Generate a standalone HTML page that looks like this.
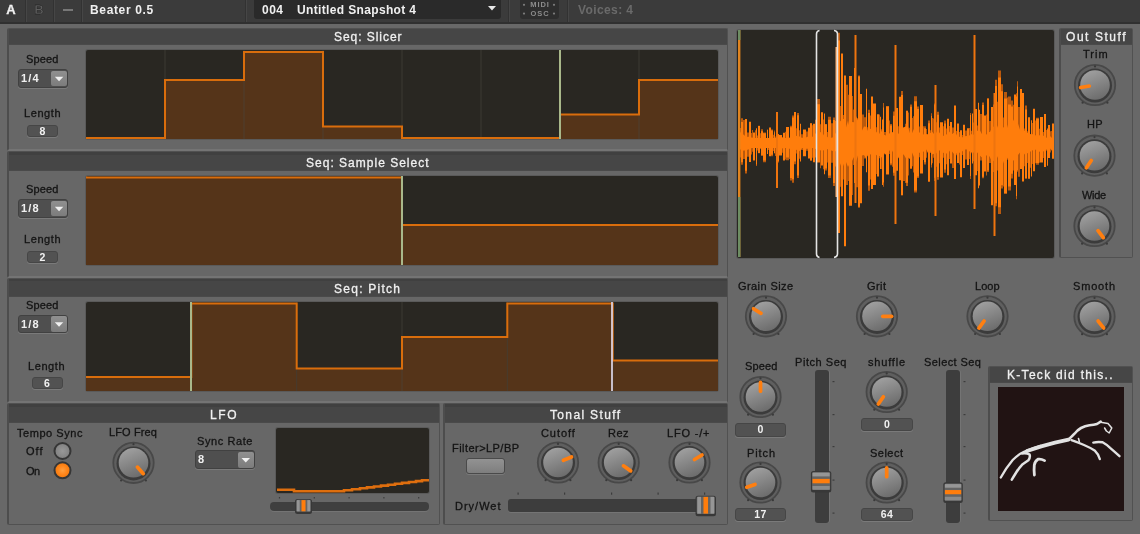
<!DOCTYPE html><html><head><meta charset="utf-8"><style>
html,body{margin:0;padding:0;}
body{width:1140px;height:534px;overflow:hidden;background:#686868;font-family:"Liberation Sans",sans-serif;position:relative;}
div{position:absolute;box-sizing:border-box;}
#wr{left:-12px;top:-12px;width:1164px;height:558px;background:linear-gradient(#3b3b3b 0,#3b3b3b 34px,#303030 34px,#303030 36px,#686868 36px);filter:blur(0.45px);}
#in{left:12px;top:12px;width:1140px;height:534px;}
svg{position:absolute;left:0;top:0;}
.t{will-change:transform;white-space:nowrap;text-align:center;line-height:12px;height:12px;font-size:11px;color:#141414;letter-spacing:0.4px;-webkit-text-stroke:0.3px #141414;}
.w{color:#f0f0f0;-webkit-text-stroke:0.3px #f0f0f0;}
.panel{background:#676767;border:1.5px solid #515151;border-left:2px solid #4d4d4d;border-radius:2px;}
.hd{background:#464646;left:0;top:0;right:0;height:17px;border-bottom:1px solid #4a4a4a;}
.disp{background:#292722;border-radius:2px;box-shadow:0 0 0 1px #5a5a5a;}
.vb{background:#525252;border:1px solid #464646;border-radius:3px;box-shadow:0 1px 0 #7a7a7a;color:#f2f2f2;font-size:10.5px;font-weight:bold;text-align:center;line-height:11.5px;letter-spacing:0.3px;}
.dd{background:#4f4f4f;border:1.3px solid #414141;border-radius:3px;box-shadow:0 1px 0 #7a7a7a;}
</style></head><body><div id="wr"><div id="in">
<div style="left:0;top:0;width:1140px;height:24px;background:#3b3b3b;border-bottom:2px solid #303030;"></div>
<div style="left:25px;top:0;width:2px;height:22px;background:#323232;border-right:1px solid #464646;"></div>
<div style="left:53px;top:0;width:2px;height:22px;background:#323232;border-right:1px solid #464646;"></div>
<div style="left:81px;top:0;width:2px;height:22px;background:#323232;border-right:1px solid #464646;"></div>
<div style="left:245px;top:0;width:2px;height:22px;background:#323232;border-right:1px solid #464646;"></div>
<div style="left:507.5px;top:0;width:2px;height:22px;background:#323232;border-right:1px solid #464646;"></div>
<div style="left:566.5px;top:0;width:2px;height:22px;background:#323232;border-right:1px solid #464646;"></div>
<div style="left:254px;top:0;width:247px;height:19px;background:#2a2a2a;border-radius:0 0 3px 3px;"></div>
<div class="t w" style="left:0.5px;top:4.0px;width:20px;font-size:13px;letter-spacing:0px;font-weight:bold;">A</div>
<div class="t " style="left:29.0px;top:4.0px;width:20px;font-size:13px;letter-spacing:0px;color:#5e5e5e;font-weight:bold;">B</div>
<div style="left:63px;top:9px;width:10px;height:2px;background:#777;"></div>
<div class="t w" style="left:89.5px;top:4px;width:100px;text-align:left;font-size:12px;font-weight:bold;letter-spacing:0.65px;-webkit-text-stroke:0;">Beater 0.5</div>
<div class="t w" style="left:262px;top:4px;width:40px;text-align:left;font-size:12px;font-weight:bold;letter-spacing:0.5px;-webkit-text-stroke:0;">004</div>
<div class="t w" style="left:297px;top:4px;width:200px;text-align:left;font-size:12px;font-weight:bold;letter-spacing:0.35px;-webkit-text-stroke:0;">Untitled Snapshot 4</div>
<svg width="1140" height="24"><path d="M488 6 h8 l-4 4.5z" fill="#e8e8e8"/></svg>
<div style="left:519.5px;top:0px;width:39px;height:18.5px;background:#2e2e2e;border-radius:0 0 3px 3px;"></div>
<div class="t" style="left:519.5px;top:1px;width:39px;font-size:7.5px;line-height:8.6px;height:18px;color:#8c8c8c;font-weight:bold;letter-spacing:0.9px;-webkit-text-stroke:0;padding-left:1px;">MIDI<br>OSC</div>
<svg width="1140" height="24"><g fill="#7c7c7c"><circle cx="524" cy="4.8" r="1.1"/><circle cx="554" cy="4.8" r="1.1"/><circle cx="524" cy="13.6" r="1.1"/><circle cx="554" cy="13.6" r="1.1"/></g></svg>
<div class="t" style="left:578px;top:4px;width:80px;text-align:left;font-size:12px;font-weight:bold;letter-spacing:0.4px;color:#6a6a6a;-webkit-text-stroke:0;">Voices: 4</div>
<div class="panel" style="left:6.7px;top:28.3px;width:721.3px;height:122.7px;border-bottom:2px solid #747474;"><div class="hd" style="height:15.7px;"></div></div>
<div class="t w" style="left:333.5px;top:30.5px;width:200px;text-align:left;font-size:12px;letter-spacing:0.95px;">Seq: Slicer</div>
<div class="disp" style="left:86px;top:50px;width:632px;height:89px;"></div>
<svg width="1140" height="534"><rect x="165.0" y="80" width="79.0" height="59.0" fill="#553419"/><rect x="244.0" y="52" width="79.0" height="87.0" fill="#553419"/><rect x="323.0" y="126.5" width="79.0" height="12.5" fill="#553419"/><rect x="560.0" y="114.5" width="79.0" height="24.5" fill="#553419"/><rect x="639.0" y="80" width="79.0" height="59.0" fill="#553419"/><rect x="164.5" y="50" width="1" height="89" fill="#4a4740" opacity="0.6"/><rect x="243.5" y="50" width="1" height="89" fill="#4a4740" opacity="0.6"/><rect x="322.5" y="50" width="1" height="89" fill="#4a4740" opacity="0.6"/><rect x="401.5" y="50" width="1" height="89" fill="#4a4740" opacity="0.6"/><rect x="480.5" y="50" width="1" height="89" fill="#4a4740" opacity="0.6"/><rect x="559.5" y="50" width="1" height="89" fill="#4a4740" opacity="0.6"/><rect x="638.5" y="50" width="1" height="89" fill="#4a4740" opacity="0.6"/><path d="M86.0 138 L165.0 138 L165.0 80 L244.0 80 L244.0 52 L323.0 52 L323.0 126.5 L402.0 126.5 L402.0 138 L481.0 138 L481.0 138 L560.0 138 L560.0 114.5 L639.0 114.5 L639.0 80 L718.0 80 " fill="none" stroke="#d96d0c" stroke-width="2" stroke-linejoin="miter"/><rect x="559" y="50" width="2" height="89" fill="#a9b88a"/></svg>
<div class="t " style="left:26.0px;top:53.0px;width:160px;text-align:left;font-size:11px;letter-spacing:0.12px;">Speed</div>
<div class="dd" style="left:17.7px;top:69.3px;width:50.6px;height:18.6px;"></div>
<div class="t w" style="left:21.2px;top:72.3px;width:40px;text-align:left;font-size:11px;font-weight:bold;letter-spacing:1.2px;-webkit-text-stroke:0;">1/4</div>
<div style="left:51.3px;top:70.8px;width:15.5px;height:15.600000000000001px;background:linear-gradient(#909090,#7c7c7c);border-radius:2px;"></div>
<svg width="1140" height="534"><path d="M54.8 76.8 h8.5 l-4.25 4.5z" fill="#f0f0f0"/></svg>
<div class="t " style="left:23.5px;top:107.0px;width:160px;text-align:left;font-size:11px;letter-spacing:0.57px;">Length</div>
<div class="vb" style="left:27px;top:124.5px;width:31px;height:12px;">8</div>
<div class="panel" style="left:6.7px;top:151px;width:721.3px;height:127px;border-bottom:2px solid #747474;"><div class="hd" style="height:19.0px;background:linear-gradient(#404040 0,#404040 3.3px,#464646 3.3px);"></div></div>
<div class="t w" style="left:306.0px;top:156.5px;width:200px;text-align:left;font-size:12px;letter-spacing:1.01px;">Seq: Sample Select</div>
<div class="disp" style="left:86px;top:176px;width:632px;height:89px;"></div>
<svg width="1140" height="534"><rect x="86.0" y="177.5" width="316.0" height="87.5" fill="#553419"/><rect x="402.0" y="225" width="316.0" height="40.0" fill="#553419"/><rect x="401.5" y="176" width="1" height="89" fill="#4a4740" opacity="0.6"/><path d="M86.0 177.5 L402.0 177.5 L402.0 225 L718.0 225 " fill="none" stroke="#d96d0c" stroke-width="2" stroke-linejoin="miter"/><rect x="401" y="176" width="2" height="89" fill="#a9b88a"/></svg>
<div class="t " style="left:26.0px;top:183.0px;width:160px;text-align:left;font-size:11px;letter-spacing:0.12px;">Speed</div>
<div class="dd" style="left:17.7px;top:199.3px;width:50.6px;height:18.6px;"></div>
<div class="t w" style="left:21.2px;top:202.3px;width:40px;text-align:left;font-size:11px;font-weight:bold;letter-spacing:1.2px;-webkit-text-stroke:0;">1/8</div>
<div style="left:51.3px;top:200.8px;width:15.5px;height:15.600000000000001px;background:linear-gradient(#909090,#7c7c7c);border-radius:2px;"></div>
<svg width="1140" height="534"><path d="M54.8 206.8 h8.5 l-4.25 4.5z" fill="#f0f0f0"/></svg>
<div class="t " style="left:23.5px;top:233.0px;width:160px;text-align:left;font-size:11px;letter-spacing:0.57px;">Length</div>
<div class="vb" style="left:27px;top:250.5px;width:31px;height:12px;">2</div>
<div class="panel" style="left:6.7px;top:278px;width:721.3px;height:125px;border-bottom:2px solid #747474;"><div class="hd" style="height:18.0px;background:linear-gradient(#404040 0,#404040 2.5px,#464646 2.5px);"></div></div>
<div class="t w" style="left:334.0px;top:282.5px;width:200px;text-align:left;font-size:12px;letter-spacing:1.26px;">Seq: Pitch</div>
<div class="disp" style="left:86px;top:302px;width:632px;height:89px;"></div>
<svg width="1140" height="534"><rect x="86.0" y="377" width="105.3" height="14.0" fill="#553419"/><rect x="191.3" y="303.5" width="105.3" height="87.5" fill="#553419"/><rect x="296.7" y="368.5" width="105.3" height="22.5" fill="#553419"/><rect x="402.0" y="337" width="105.3" height="54.0" fill="#553419"/><rect x="507.3" y="303.5" width="105.3" height="87.5" fill="#553419"/><rect x="612.7" y="360.5" width="105.3" height="30.5" fill="#553419"/><rect x="190.8" y="302" width="1" height="89" fill="#4a4740" opacity="0.6"/><rect x="296.2" y="302" width="1" height="89" fill="#4a4740" opacity="0.6"/><rect x="401.5" y="302" width="1" height="89" fill="#4a4740" opacity="0.6"/><rect x="506.8" y="302" width="1" height="89" fill="#4a4740" opacity="0.6"/><rect x="612.2" y="302" width="1" height="89" fill="#4a4740" opacity="0.6"/><path d="M86.0 377 L191.3 377 L191.3 303.5 L296.7 303.5 L296.7 368.5 L402.0 368.5 L402.0 337 L507.3 337 L507.3 303.5 L612.7 303.5 L612.7 360.5 L718.0 360.5 " fill="none" stroke="#d96d0c" stroke-width="2" stroke-linejoin="miter"/><rect x="190" y="302" width="2" height="89" fill="#a9b88a"/><rect x="611.1" y="302" width="1.8" height="89" fill="#d6cedd"/></svg>
<div class="t " style="left:26.0px;top:298.5px;width:160px;text-align:left;font-size:11px;letter-spacing:0.12px;">Speed</div>
<div class="dd" style="left:17.7px;top:314.8px;width:50.6px;height:18.6px;"></div>
<div class="t w" style="left:21.2px;top:317.8px;width:40px;text-align:left;font-size:11px;font-weight:bold;letter-spacing:1.2px;-webkit-text-stroke:0;">1/8</div>
<div style="left:51.3px;top:316.3px;width:15.5px;height:15.600000000000001px;background:linear-gradient(#909090,#7c7c7c);border-radius:2px;"></div>
<svg width="1140" height="534"><path d="M54.8 322.3 h8.5 l-4.25 4.5z" fill="#f0f0f0"/></svg>
<div class="t " style="left:28.0px;top:359.5px;width:160px;text-align:left;font-size:11px;letter-spacing:0.57px;">Length</div>
<div class="vb" style="left:31.5px;top:377.0px;width:31px;height:12px;">6</div>
<div class="panel" style="left:6.7px;top:403px;width:433.3px;height:122px;"><div class="hd" style="height:19.0px;background:linear-gradient(#404040 0,#404040 3.2px,#464646 3.2px);"></div></div>
<div class="t w" style="left:210.0px;top:408.5px;width:200px;text-align:left;font-size:12px;letter-spacing:1.58px;">LFO</div>
<div class="t " style="left:17.0px;top:426.5px;width:160px;text-align:left;font-size:11px;letter-spacing:0.55px;">Tempo Sync</div>
<div class="t " style="left:26.0px;top:445.0px;width:160px;text-align:left;font-size:11px;letter-spacing:1.02px;">Off</div>
<div class="t " style="left:26.0px;top:464.5px;width:160px;text-align:left;font-size:11px;letter-spacing:-0.67px;">On</div>
<div class="t " style="left:109.0px;top:426.0px;width:160px;text-align:left;font-size:11px;letter-spacing:0.13px;">LFO Freq</div>
<div class="t " style="left:197.0px;top:435.0px;width:160px;text-align:left;font-size:11px;letter-spacing:0.59px;">Sync Rate</div>
<div class="dd" style="left:194.7px;top:450.4px;width:60.3px;height:18.8px;"></div>
<div class="t w" style="left:198.2px;top:453.4px;width:40px;text-align:left;font-size:11px;font-weight:bold;letter-spacing:1.2px;-webkit-text-stroke:0;">8</div>
<div style="left:238.0px;top:451.9px;width:15.5px;height:15.8px;background:linear-gradient(#909090,#7c7c7c);border-radius:2px;"></div>
<svg width="1140" height="534"><path d="M241.5 457.9 h8.5 l-4.25 4.5z" fill="#f0f0f0"/></svg>
<div class="disp" style="left:276px;top:428px;width:153px;height:65px;"></div>
<div style="left:270px;top:502px;width:159px;height:8.5px;background:#3f3f3f;border-radius:4px;box-shadow:0 1px 0 #747474;"></div>
<div class="panel" style="left:443px;top:403px;width:285px;height:122px;"><div class="hd" style="height:19.0px;background:linear-gradient(#404040 0,#404040 3.2px,#464646 3.2px);"></div></div>
<div class="t w" style="left:550.0px;top:408.5px;width:200px;text-align:left;font-size:12px;letter-spacing:1.35px;">Tonal Stuff</div>
<div class="t " style="left:452.0px;top:441.5px;width:160px;text-align:left;font-size:11px;letter-spacing:0.45px;">Filter&gt;LP/BP</div>
<div style="left:466px;top:458px;width:39px;height:16px;background:linear-gradient(#929292,#7e7e7e);border:1px solid #4a4a4a;border-radius:3px;box-shadow:0 1px 0 #7a7a7a;"></div>
<div class="t " style="left:540.8px;top:426.5px;width:160px;text-align:left;font-size:11px;letter-spacing:0.92px;">Cutoff</div>
<div class="t " style="left:607.5px;top:426.5px;width:160px;text-align:left;font-size:11px;letter-spacing:0.47px;">Rez</div>
<div class="t " style="left:667.0px;top:426.5px;width:160px;text-align:left;font-size:11px;letter-spacing:0.82px;">LFO -/+</div>
<div class="t " style="left:454.5px;top:499.5px;width:160px;text-align:left;font-size:11px;letter-spacing:1.00px;">Dry/Wet</div>
<div style="left:507.5px;top:498.5px;width:207px;height:13.3px;background:#3d3d3d;border-radius:3px;box-shadow:0 1px 0 #747474;"></div>
<div class="disp" style="left:736.5px;top:29.5px;width:317.5px;height:228.5px;"></div>
<div class="panel" style="left:1059px;top:28px;width:74px;height:230px;"><div class="hd" style="height:16.0px;"></div></div>
<div class="t w" style="left:1065.5px;top:30.5px;width:200px;text-align:left;font-size:12px;letter-spacing:1.55px;">Out Stuff</div>
<div class="t " style="left:1083.0px;top:48.0px;width:160px;text-align:left;font-size:11px;letter-spacing:1.04px;">Trim</div>
<div class="t " style="left:1087.1px;top:118.3px;width:160px;text-align:left;font-size:11px;letter-spacing:0.22px;">HP</div>
<div class="t " style="left:1082.2px;top:189.2px;width:160px;text-align:left;font-size:11px;letter-spacing:-0.32px;">Wide</div>
<div class="t " style="left:738.0px;top:280.0px;width:160px;text-align:left;font-size:11px;letter-spacing:0.41px;">Grain Size</div>
<div class="t " style="left:867.0px;top:280.0px;width:160px;text-align:left;font-size:11px;letter-spacing:0.43px;">Grit</div>
<div class="t " style="left:975.0px;top:280.0px;width:160px;text-align:left;font-size:11px;letter-spacing:0.01px;">Loop</div>
<div class="t " style="left:1073.0px;top:280.2px;width:160px;text-align:left;font-size:11px;letter-spacing:0.82px;">Smooth</div>
<div class="t " style="left:744.5px;top:360.0px;width:160px;text-align:left;font-size:11px;letter-spacing:0.17px;">Speed</div>
<div class="t " style="left:794.5px;top:356.0px;width:160px;text-align:left;font-size:11px;letter-spacing:0.55px;">Pitch Seq</div>
<div class="t " style="left:868.0px;top:356.0px;width:160px;text-align:left;font-size:11px;letter-spacing:0.80px;">shuffle</div>
<div class="t " style="left:923.8px;top:356.0px;width:160px;text-align:left;font-size:11px;letter-spacing:0.42px;">Select Seq</div>
<div class="t " style="left:747.0px;top:446.5px;width:160px;text-align:left;font-size:11px;letter-spacing:0.89px;">Pitch</div>
<div class="t " style="left:869.5px;top:446.5px;width:160px;text-align:left;font-size:11px;letter-spacing:0.49px;">Select</div>
<div class="vb" style="left:735px;top:423px;width:51px;height:13.5px;">0</div>
<div class="vb" style="left:735px;top:507.7px;width:51px;height:13.5px;">17</div>
<div class="vb" style="left:861px;top:417.7px;width:52px;height:13.5px;">0</div>
<div class="vb" style="left:861px;top:507.7px;width:52px;height:13.5px;">64</div>
<div style="left:815px;top:370px;width:13.8px;height:153px;background:#3d3d3d;border-radius:3px;box-shadow:1px 0 0 #747474;"></div>
<div style="left:946px;top:370px;width:13.8px;height:153px;background:#3d3d3d;border-radius:3px;box-shadow:1px 0 0 #747474;"></div>
<div class="panel" style="left:988px;top:366px;width:145px;height:155px;"><div class="hd" style="height:16.0px;"></div></div>
<div class="t w" style="left:1007.0px;top:368.5px;width:200px;text-align:left;font-size:12px;letter-spacing:1.30px;">K-Teck did this..</div>
<div style="left:998px;top:387px;width:126px;height:124px;background:#211313;"></div>
<svg width="1140" height="534"><defs><linearGradient id="kg" x1="0.2" y1="0" x2="0.6" y2="1"><stop offset="0" stop-color="#a2a2a2"/><stop offset="1" stop-color="#6c6c6c"/></linearGradient><linearGradient id="hg" x1="0" y1="0" x2="0" y2="1"><stop offset="0" stop-color="#9a9a9a"/><stop offset="1" stop-color="#6e6e6e"/></linearGradient><radialGradient id="rg0"><stop offset="0" stop-color="#989898"/><stop offset="1" stop-color="#808080"/></radialGradient><radialGradient id="rg1"><stop offset="0" stop-color="#ffa040"/><stop offset="0.6" stop-color="#ff8418"/><stop offset="1" stop-color="#f07a10"/></radialGradient></defs><g><circle cx="1095" cy="85" r="20.2" fill="#5f5f5f" stroke="#484848" stroke-width="1.8"/><circle cx="1095" cy="85.6" r="17" fill="#3b3b3b"/><circle cx="1095" cy="85" r="14.8" fill="url(#kg)"/><line x1="1089.29" y1="86.01" x2="1080.62" y2="87.54" stroke="#ff7f10" stroke-width="3.7" stroke-linecap="round"/><circle cx="1095.0" cy="66.4" r="1.1" fill="#3a3a3a"/><circle cx="1107.4" cy="102.7" r="1.1" fill="#3a3a3a"/><circle cx="1082.6" cy="102.7" r="1.1" fill="#3a3a3a"/></g><g><circle cx="1094.5" cy="155.7" r="20.2" fill="#5f5f5f" stroke="#484848" stroke-width="1.8"/><circle cx="1094.5" cy="156.29999999999998" r="17" fill="#3b3b3b"/><circle cx="1094.5" cy="155.7" r="14.8" fill="url(#kg)"/><line x1="1091.26" y1="160.51" x2="1086.34" y2="167.80" stroke="#ff7f10" stroke-width="3.7" stroke-linecap="round"/><circle cx="1094.5" cy="137.1" r="1.1" fill="#3a3a3a"/><circle cx="1106.9" cy="173.4" r="1.1" fill="#3a3a3a"/><circle cx="1082.1" cy="173.4" r="1.1" fill="#3a3a3a"/></g><g><circle cx="1094.5" cy="226" r="20.2" fill="#5f5f5f" stroke="#484848" stroke-width="1.8"/><circle cx="1094.5" cy="226.6" r="17" fill="#3b3b3b"/><circle cx="1094.5" cy="226" r="14.8" fill="url(#kg)"/><line x1="1097.99" y1="230.63" x2="1103.29" y2="237.66" stroke="#ff7f10" stroke-width="3.7" stroke-linecap="round"/><circle cx="1094.5" cy="207.4" r="1.1" fill="#3a3a3a"/><circle cx="1106.9" cy="243.7" r="1.1" fill="#3a3a3a"/><circle cx="1082.1" cy="243.7" r="1.1" fill="#3a3a3a"/></g><g><circle cx="766" cy="316.3" r="20.2" fill="#5f5f5f" stroke="#484848" stroke-width="1.8"/><circle cx="766" cy="316.90000000000003" r="17" fill="#3b3b3b"/><circle cx="766" cy="316.3" r="14.8" fill="url(#kg)"/><line x1="761.03" y1="313.31" x2="753.49" y2="308.78" stroke="#ff7f10" stroke-width="3.7" stroke-linecap="round"/><circle cx="766.0" cy="297.7" r="1.1" fill="#3a3a3a"/><circle cx="778.4" cy="334.0" r="1.1" fill="#3a3a3a"/><circle cx="753.6" cy="334.0" r="1.1" fill="#3a3a3a"/></g><g><circle cx="877" cy="316.3" r="20.2" fill="#5f5f5f" stroke="#484848" stroke-width="1.8"/><circle cx="877" cy="316.90000000000003" r="17" fill="#3b3b3b"/><circle cx="877" cy="316.3" r="14.8" fill="url(#kg)"/><line x1="882.80" y1="316.30" x2="891.60" y2="316.30" stroke="#ff7f10" stroke-width="3.7" stroke-linecap="round"/><circle cx="877.0" cy="297.7" r="1.1" fill="#3a3a3a"/><circle cx="889.4" cy="334.0" r="1.1" fill="#3a3a3a"/><circle cx="864.6" cy="334.0" r="1.1" fill="#3a3a3a"/></g><g><circle cx="987.5" cy="316.3" r="20.2" fill="#5f5f5f" stroke="#484848" stroke-width="1.8"/><circle cx="987.5" cy="316.90000000000003" r="17" fill="#3b3b3b"/><circle cx="987.5" cy="316.3" r="14.8" fill="url(#kg)"/><line x1="984.09" y1="320.99" x2="978.92" y2="328.11" stroke="#ff7f10" stroke-width="3.7" stroke-linecap="round"/><circle cx="987.5" cy="297.7" r="1.1" fill="#3a3a3a"/><circle cx="999.9" cy="334.0" r="1.1" fill="#3a3a3a"/><circle cx="975.1" cy="334.0" r="1.1" fill="#3a3a3a"/></g><g><circle cx="1094.5" cy="316.5" r="20.2" fill="#5f5f5f" stroke="#484848" stroke-width="1.8"/><circle cx="1094.5" cy="317.1" r="17" fill="#3b3b3b"/><circle cx="1094.5" cy="316.5" r="14.8" fill="url(#kg)"/><line x1="1098.11" y1="321.04" x2="1103.59" y2="327.93" stroke="#ff7f10" stroke-width="3.7" stroke-linecap="round"/><circle cx="1094.5" cy="297.9" r="1.1" fill="#3a3a3a"/><circle cx="1106.9" cy="334.2" r="1.1" fill="#3a3a3a"/><circle cx="1082.1" cy="334.2" r="1.1" fill="#3a3a3a"/></g><g><circle cx="760.5" cy="397" r="20.2" fill="#5f5f5f" stroke="#484848" stroke-width="1.8"/><circle cx="760.5" cy="397.6" r="17" fill="#3b3b3b"/><circle cx="760.5" cy="397" r="14.8" fill="url(#kg)"/><line x1="760.50" y1="391.20" x2="760.50" y2="382.40" stroke="#ff7f10" stroke-width="3.7" stroke-linecap="round"/><circle cx="760.5" cy="378.4" r="1.1" fill="#3a3a3a"/><circle cx="772.9" cy="414.7" r="1.1" fill="#3a3a3a"/><circle cx="748.1" cy="414.7" r="1.1" fill="#3a3a3a"/></g><g><circle cx="886.7" cy="392" r="20.2" fill="#5f5f5f" stroke="#484848" stroke-width="1.8"/><circle cx="886.7" cy="392.6" r="17" fill="#3b3b3b"/><circle cx="886.7" cy="392" r="14.8" fill="url(#kg)"/><line x1="883.37" y1="396.75" x2="878.33" y2="403.96" stroke="#ff7f10" stroke-width="3.7" stroke-linecap="round"/><circle cx="886.7" cy="373.4" r="1.1" fill="#3a3a3a"/><circle cx="899.1" cy="409.7" r="1.1" fill="#3a3a3a"/><circle cx="874.3" cy="409.7" r="1.1" fill="#3a3a3a"/></g><g><circle cx="760.5" cy="482.5" r="20.2" fill="#5f5f5f" stroke="#484848" stroke-width="1.8"/><circle cx="760.5" cy="483.1" r="17" fill="#3b3b3b"/><circle cx="760.5" cy="482.5" r="14.8" fill="url(#kg)"/><line x1="755.02" y1="484.39" x2="746.70" y2="487.25" stroke="#ff7f10" stroke-width="3.7" stroke-linecap="round"/><circle cx="760.5" cy="463.9" r="1.1" fill="#3a3a3a"/><circle cx="772.9" cy="500.2" r="1.1" fill="#3a3a3a"/><circle cx="748.1" cy="500.2" r="1.1" fill="#3a3a3a"/></g><g><circle cx="886.7" cy="482.5" r="20.2" fill="#5f5f5f" stroke="#484848" stroke-width="1.8"/><circle cx="886.7" cy="483.1" r="17" fill="#3b3b3b"/><circle cx="886.7" cy="482.5" r="14.8" fill="url(#kg)"/><line x1="886.70" y1="476.70" x2="886.70" y2="467.90" stroke="#ff7f10" stroke-width="3.7" stroke-linecap="round"/><circle cx="886.7" cy="463.9" r="1.1" fill="#3a3a3a"/><circle cx="899.1" cy="500.2" r="1.1" fill="#3a3a3a"/><circle cx="874.3" cy="500.2" r="1.1" fill="#3a3a3a"/></g><g><circle cx="133.5" cy="462.8" r="20.2" fill="#5f5f5f" stroke="#484848" stroke-width="1.8"/><circle cx="133.5" cy="463.40000000000003" r="17" fill="#3b3b3b"/><circle cx="133.5" cy="462.8" r="14.8" fill="url(#kg)"/><line x1="137.38" y1="467.11" x2="143.27" y2="473.65" stroke="#ff7f10" stroke-width="3.7" stroke-linecap="round"/><circle cx="133.5" cy="444.2" r="1.1" fill="#3a3a3a"/><circle cx="145.9" cy="480.5" r="1.1" fill="#3a3a3a"/><circle cx="121.1" cy="480.5" r="1.1" fill="#3a3a3a"/></g><g><circle cx="558" cy="462.5" r="20.2" fill="#5f5f5f" stroke="#484848" stroke-width="1.8"/><circle cx="558" cy="463.1" r="17" fill="#3b3b3b"/><circle cx="558" cy="462.5" r="14.8" fill="url(#kg)"/><line x1="563.38" y1="460.33" x2="571.54" y2="457.03" stroke="#ff7f10" stroke-width="3.7" stroke-linecap="round"/><circle cx="558.0" cy="443.9" r="1.1" fill="#3a3a3a"/><circle cx="570.4" cy="480.2" r="1.1" fill="#3a3a3a"/><circle cx="545.6" cy="480.2" r="1.1" fill="#3a3a3a"/></g><g><circle cx="618.7" cy="462.5" r="20.2" fill="#5f5f5f" stroke="#484848" stroke-width="1.8"/><circle cx="618.7" cy="463.1" r="17" fill="#3b3b3b"/><circle cx="618.7" cy="462.5" r="14.8" fill="url(#kg)"/><line x1="623.45" y1="465.83" x2="630.66" y2="470.87" stroke="#ff7f10" stroke-width="3.7" stroke-linecap="round"/><circle cx="618.7" cy="443.9" r="1.1" fill="#3a3a3a"/><circle cx="631.1" cy="480.2" r="1.1" fill="#3a3a3a"/><circle cx="606.3" cy="480.2" r="1.1" fill="#3a3a3a"/></g><g><circle cx="689.5" cy="462.5" r="20.2" fill="#5f5f5f" stroke="#484848" stroke-width="1.8"/><circle cx="689.5" cy="463.1" r="17" fill="#3b3b3b"/><circle cx="689.5" cy="462.5" r="14.8" fill="url(#kg)"/><line x1="694.47" y1="459.51" x2="702.01" y2="454.98" stroke="#ff7f10" stroke-width="3.7" stroke-linecap="round"/><circle cx="689.5" cy="443.9" r="1.1" fill="#3a3a3a"/><circle cx="701.9" cy="480.2" r="1.1" fill="#3a3a3a"/><circle cx="677.1" cy="480.2" r="1.1" fill="#3a3a3a"/></g><circle cx="62.5" cy="451" r="8" fill="url(#rg0)" stroke="#363636" stroke-width="2"/><circle cx="62.5" cy="470.3" r="8" fill="url(#rg1)" stroke="#363636" stroke-width="2"/><path d="M277 489.8 H294 V491.2 H344 V490.2 H352 V489.3 H360 V488.3 H367 V487.4 H374 V486.5 H381 V485.6 H388 V484.7 H395 V483.8 H402 V482.9 H409 V482 H416 V481.1 H422 V480.2 H429" fill="none" stroke="#de6e0e" stroke-width="2.6"/><rect x="295" y="499.0" width="17" height="15" rx="2.5" fill="#383838"/><rect x="296.2" y="499.7" width="14.6" height="12" rx="1.5" fill="#646464"/><rect x="296.8" y="500.1" width="2.9" height="11.2" fill="#969696"/><rect x="307.3" y="500.1" width="2.9" height="11.2" fill="#969696"/><rect x="301.5" y="500.1" width="4" height="11.2" fill="#ff7d0c"/><rect x="278.9" y="497" width="1.2" height="1.5" fill="#3c3c3c"/><rect x="313.7" y="497" width="1.2" height="1.5" fill="#3c3c3c"/><rect x="348.5" y="497" width="1.2" height="1.5" fill="#3c3c3c"/><rect x="383.3" y="497" width="1.2" height="1.5" fill="#3c3c3c"/><rect x="418.1" y="497" width="1.2" height="1.5" fill="#3c3c3c"/><rect x="695.5" y="495.8" width="20.5" height="20.5" rx="2.5" fill="#383838"/><rect x="696.7" y="496.5" width="18.1" height="17.5" rx="1.5" fill="#646464"/><rect x="697.3" y="496.90000000000003" width="3.7" height="16.7" fill="#969696"/><rect x="710.5" y="496.90000000000003" width="3.7" height="16.7" fill="#969696"/><rect x="703.45" y="496.90000000000003" width="4.6" height="16.7" fill="#ff7d0c"/><rect x="517.5" y="492.5" width="1.2" height="2.2" fill="#3c3c3c"/><rect x="564" y="492.5" width="1.2" height="2.2" fill="#3c3c3c"/><rect x="611" y="492.5" width="1.2" height="2.2" fill="#3c3c3c"/><rect x="657.5" y="492.5" width="1.2" height="2.2" fill="#3c3c3c"/><rect x="704" y="492.5" width="1.2" height="2.2" fill="#3c3c3c"/><rect x="810.9" y="470.9" width="20.4" height="21.5" rx="2.5" fill="#383838"/><rect x="812.1" y="472.09999999999997" width="18.0" height="18" rx="1.5" fill="#646464"/><rect x="812.5" y="472.7" width="17.2" height="3.7" fill="#969696"/><rect x="812.5" y="486.0" width="17.2" height="3.7" fill="#8a8a8a"/><rect x="812.5" y="478.9" width="17.2" height="4.4" fill="#ff7d0c"/><rect x="943.3" y="482.3" width="19.5" height="20.8" rx="2.5" fill="#383838"/><rect x="944.5" y="483.5" width="17.1" height="17.3" rx="1.5" fill="#646464"/><rect x="944.9" y="484.1" width="16.3" height="3.6" fill="#969696"/><rect x="944.9" y="496.8" width="16.3" height="3.6" fill="#8a8a8a"/><rect x="944.9" y="490.04999999999995" width="16.3" height="4.2" fill="#ff7d0c"/><rect x="832.5" y="381" width="2" height="1.2" fill="#3c3c3c"/><rect x="832.5" y="414" width="2" height="1.2" fill="#3c3c3c"/><rect x="832.5" y="446" width="2" height="1.2" fill="#3c3c3c"/><rect x="832.5" y="479.5" width="2" height="1.2" fill="#3c3c3c"/><rect x="832.5" y="512.5" width="2" height="1.2" fill="#3c3c3c"/><rect x="963.5" y="381" width="2" height="1.2" fill="#3c3c3c"/><rect x="963.5" y="414" width="2" height="1.2" fill="#3c3c3c"/><rect x="963.5" y="446" width="2" height="1.2" fill="#3c3c3c"/><rect x="963.5" y="479.5" width="2" height="1.2" fill="#3c3c3c"/><rect x="963.5" y="512.5" width="2" height="1.2" fill="#3c3c3c"/><path d="M740 128.0h1V157.6h-1zM741 118.2h2V164.7h-2zM743 120.1h2V159.1h-2zM745 119.0h2V173.6h-2zM747 132.6h2V156.7h-2zM751 133.0h1V154.6h-1zM752 130.1h1V151.7h-1zM753 132.4h2V160.8h-2zM755 130.2h1V147.8h-1zM756 128.3h1V165.9h-1zM757 135.5h1V150.5h-1zM758 125.8h2V153.3h-2zM760 133.3h1V149.0h-1zM761 129.3h2V155.5h-2zM763 132.5h3V162.3h-3zM766 139.4h1V148.1h-1zM767 129.7h1V154.1h-1zM768 139.5h1V150.0h-1zM771 129.6h2V156.3h-2zM773 134.7h1V150.9h-1zM774 130.6h1V153.6h-1zM775 136.4h1V155.9h-1zM776 133.9h3V162.6h-3zM782 137.1h1V152.8h-1zM785 131.7h1V159.5h-1zM786 126.9h3V160.2h-3zM789 137.5h1V158.9h-1zM790 125.8h2V180.6h-2zM792 115.4h2V182.8h-2zM794 112.1h2V164.2h-2zM796 128.2h1V153.5h-1zM797 113.0h2V177.9h-2zM799 130.3h1V158.8h-1zM801 134.2h2V149.9h-2zM806 131.4h2V150.8h-2zM810 123.0h2V161.1h-2zM812 125.2h1V157.8h-1zM815 119.7h2V157.6h-2zM817 99.1h3V162.4h-3zM820 124.2h1V168.2h-1zM823 119.5h1V169.3h-1zM825 124.2h2V170.5h-2zM827 132.1h1V162.6h-1zM828 116.7h3V178.0h-3zM831 123.2h2V162.8h-2zM833 117.4h2V186.0h-2zM835 121.1h1V166.5h-1zM837 32.8h3V233.1h-3zM840 105.9h1V186.8h-1zM843 114.9h1V179.4h-1zM846 84.8h2V184.9h-2zM848 94.8h1V181.0h-1zM852 96.1h1V194.9h-1zM853 109.6h1V165.1h-1zM856 118.3h2V187.2h-2zM858 75.6h2V207.8h-2zM862 114.5h2V165.9h-2zM864 117.2h2V158.4h-2zM867 127.2h1V156.2h-1zM868 109.7h2V190.7h-2zM870 115.5h1V179.4h-1zM876 127.3h1V173.9h-1zM879 114.4h1V158.3h-1zM881 129.2h1V169.1h-1zM883 102.9h1V186.8h-1zM884 132.1h2V154.3h-2zM886 106.0h3V174.8h-3zM889 120.5h1V153.9h-1zM890 123.9h2V165.2h-2zM892 134.1h1V166.7h-1zM893 111.6h2V175.7h-2zM895 127.1h1V155.8h-1zM898 126.3h1V157.8h-1zM901 91.0h2V195.4h-2zM903 127.6h2V181.0h-2zM905 123.7h1V183.0h-1zM906 110.4h2V186.1h-2zM908 112.6h1V175.5h-1zM909 127.7h1V158.2h-1zM910 104.6h2V168.9h-2zM912 117.9h1V166.3h-1zM913 116.2h1V172.4h-1zM914 96.3h3V192.6h-3zM917 106.6h2V178.0h-2zM919 126.6h1V157.2h-1zM923 126.3h1V160.1h-1zM924 126.3h2V164.6h-2zM926 128.9h1V157.8h-1zM927 134.3h1V152.5h-1zM928 120.4h2V181.7h-2zM930 130.2h1V153.0h-1zM931 113.2h1V167.6h-1zM932 117.9h1V163.2h-1zM933 118.6h1V157.7h-1zM934 103.6h2V180.9h-2zM936 122.3h1V166.8h-1zM937 111.8h2V179.7h-2zM939 127.5h1V163.3h-1zM943 126.3h1V157.8h-1zM944 120.5h2V172.7h-2zM946 128.5h1V164.3h-1zM949 126.1h1V158.9h-1zM952 127.5h2V168.1h-2zM956 131.0h1V155.3h-1zM959 131.9h1V164.4h-1zM962 134.9h1V154.9h-1zM965 130.5h2V159.5h-2zM969 128.1h1V159.0h-1zM970 113.1h1V179.1h-1zM971 130.8h1V153.3h-1zM973 122.5h1V161.3h-1zM974 120.9h1V160.1h-1zM977 125.6h1V171.0h-1zM980 114.1h2V160.4h-2zM982 102.4h2V178.3h-2zM986 114.5h1V175.5h-1zM987 98.1h2V171.9h-2zM989 121.1h2V162.9h-2zM993 104.6h2V171.9h-2zM995 79.7h2V206.2h-2zM997 101.7h1V170.4h-1zM998 70.4h3V214.0h-3zM1001 84.3h2V188.6h-2zM1003 117.4h1V186.6h-1zM1004 92.1h3V193.5h-3zM1007 97.4h1V159.8h-1zM1008 96.6h3V190.4h-3zM1011 100.5h2V178.6h-2zM1013 104.7h1V170.5h-1zM1016 93.3h1V199.2h-1zM1017 81.3h1V171.8h-1zM1018 107.1h2V176.8h-2zM1024 128.4h1V166.3h-1zM1025 105.6h2V178.7h-2zM1027 131.3h1V163.1h-1zM1030 134.3h1V167.7h-1zM1032 122.9h1V164.1h-1zM1035 120.6h1V163.2h-1zM1036 117.7h3V164.7h-3zM1039 128.7h1V162.7h-1zM1043 131.9h1V157.9h-1zM1046 129.9h1V150.7h-1zM1047 128.3h1V165.8h-1zM1050 131.2h1V152.5h-1zM1051 131.0h1V150.4h-1z" fill="#b9590d"/><path d="M738 97.9h2V174.1h-2zM741 121.9h2V162.3h-2zM745 119.1h2V170.8h-2zM749 121.8h2V161.9h-2zM753 132.7h2V160.1h-2zM756 128.5h1V164.5h-1zM758 126.0h2V153.1h-2zM761 131.2h2V155.5h-2zM763 133.2h3V160.6h-3zM767 129.8h1V153.9h-1zM769 127.6h2V156.2h-2zM771 130.6h2V154.8h-2zM774 132.3h1V153.0h-1zM776 134.3h3V161.3h-3zM779 134.9h3V155.5h-3zM783 132.7h2V160.6h-2zM786 126.9h3V157.5h-3zM790 127.3h2V177.9h-2zM792 117.5h2V179.2h-2zM794 112.1h2V161.4h-2zM797 115.3h2V175.6h-2zM800 123.7h1V161.6h-1zM803 129.6h3V156.3h-3zM808 127.7h2V158.4h-2zM810 123.5h2V159.9h-2zM813 123.7h2V162.2h-2zM817 104.3h3V162.2h-3zM821 112.2h2V165.5h-2zM824 113.5h1V174.3h-1zM825 124.2h2V168.6h-2zM828 119.7h3V175.6h-3zM833 119.9h2V183.1h-2zM836 111.2h1V191.4h-1zM837 40.5h3V232.9h-3zM841 53.5h2V196.2h-2zM844 75.4h2V246.3h-2zM849 76.1h3V205.7h-3zM854 67.9h2V183.0h-2zM858 76.5h2V206.7h-2zM860 94.0h2V203.2h-2zM866 88.7h1V172.2h-1zM868 113.0h2V185.4h-2zM871 96.5h2V189.1h-2zM873 103.5h3V185.0h-3zM877 114.2h2V176.6h-2zM880 116.7h1V169.1h-1zM882 119.4h1V185.0h-1zM883 107.4h1V182.4h-1zM886 106.4h3V174.0h-3zM890 125.5h2V163.6h-2zM893 115.7h2V172.7h-2zM896 108.1h2V170.8h-2zM899 96.8h2V180.2h-2zM901 95.1h2V195.0h-2zM906 110.9h2V182.8h-2zM910 106.8h2V168.3h-2zM914 101.3h3V190.6h-3zM917 109.0h2V176.6h-2zM920 105.0h3V173.6h-3zM924 128.3h2V162.2h-2zM928 123.3h2V181.5h-2zM931 115.9h1V164.7h-1zM934 104.8h2V177.7h-2zM937 114.7h2V176.9h-2zM940 122.2h3V177.5h-3zM944 123.4h2V169.5h-2zM947 118.8h2V175.3h-2zM950 121.9h2V163.5h-2zM954 105.6h2V179.0h-2zM957 123.5h2V163.0h-2zM960 130.3h2V177.3h-2zM963 124.8h2V168.1h-2zM967 128.2h2V164.9h-2zM970 115.1h1V176.1h-1zM972 113.5h1V163.6h-1zM975 109.1h2V175.3h-2zM978 102.8h1V188.2h-1zM979 109.7h1V185.6h-1zM982 105.0h2V176.7h-2zM984 115.4h2V171.4h-2zM987 99.0h2V170.5h-2zM991 107.1h2V205.3h-2zM995 86.1h2V203.3h-2zM998 77.6h3V207.2h-3zM1001 91.3h2V185.3h-2zM1004 98.4h3V193.5h-3zM1008 104.6h3V186.5h-3zM1011 106.4h2V173.8h-2zM1014 94.6h2V184.9h-2zM1016 96.4h1V196.1h-1zM1017 86.6h1V170.2h-1zM1020 89.1h2V168.9h-2zM1022 93.0h2V181.4h-2zM1025 109.5h2V178.3h-2zM1028 117.3h2V178.8h-2zM1031 120.3h1V176.5h-1zM1033 108.8h2V171.2h-2zM1036 118.8h3V163.1h-3zM1040 117.0h3V162.4h-3zM1044 113.9h2V167.1h-2zM1047 129.3h1V165.5h-1zM1048 124.9h2V158.1h-2zM1052 123.4h2V158.8h-2z" fill="#ff7d0c"/><path d="M738.0 135.8 L740.0 131.2 L742.0 134.9 L744.0 134.5 L746.0 138.0 L748.0 136.4 L750.0 137.5 L752.0 137.5 L754.0 138.0 L756.0 138.0 L758.0 138.0 L760.0 138.0 L762.0 138.0 L764.0 138.0 L766.0 138.0 L768.0 138.0 L770.0 138.0 L772.0 138.0 L774.0 138.0 L776.0 138.0 L778.0 138.0 L780.0 138.0 L782.0 138.0 L784.0 138.0 L786.0 138.0 L788.0 137.8 L790.0 137.9 L792.0 138.0 L794.0 136.3 L796.0 135.8 L798.0 136.2 L800.0 136.5 L802.0 137.9 L804.0 137.0 L806.0 137.6 L808.0 136.6 L810.0 136.6 L812.0 137.3 L814.0 135.1 L816.0 133.1 L818.0 134.4 L820.0 132.2 L822.0 132.0 L824.0 135.5 L826.0 135.4 L828.0 137.6 L830.0 136.8 L832.0 138.0 L834.0 135.8 L836.0 132.6 L838.0 122.5 L840.0 121.4 L842.0 119.5 L844.0 118.8 L846.0 127.6 L848.0 120.6 L850.0 129.9 L852.0 122.0 L854.0 122.2 L856.0 115.9 L858.0 120.4 L860.0 122.6 L862.0 130.6 L864.0 126.6 L866.0 126.7 L868.0 130.9 L870.0 128.4 L872.0 129.8 L874.0 129.9 L876.0 132.8 L878.0 130.0 L880.0 134.3 L882.0 130.0 L884.0 134.8 L886.0 135.5 L888.0 134.4 L890.0 132.9 L892.0 132.1 L894.0 132.8 L896.0 132.9 L898.0 133.8 L900.0 133.0 L902.0 128.6 L904.0 127.2 L906.0 126.2 L908.0 126.5 L910.0 133.3 L912.0 133.2 L914.0 128.8 L916.0 132.4 L918.0 134.9 L920.0 131.5 L922.0 131.9 L924.0 134.9 L926.0 134.0 L928.0 134.6 L930.0 133.3 L932.0 131.6 L934.0 133.9 L936.0 131.3 L938.0 134.9 L940.0 132.0 L942.0 135.0 L944.0 136.0 L946.0 134.6 L948.0 134.1 L950.0 131.2 L952.0 134.3 L954.0 132.6 L956.0 133.6 L958.0 137.5 L960.0 136.4 L962.0 137.6 L964.0 136.6 L966.0 136.1 L968.0 136.3 L970.0 135.0 L972.0 134.0 L974.0 134.7 L976.0 132.2 L978.0 130.2 L980.0 130.6 L982.0 134.2 L984.0 132.1 L986.0 135.1 L988.0 132.2 L990.0 132.0 L992.0 127.2 L994.0 126.5 L996.0 122.4 L998.0 127.8 L1000.0 122.2 L1002.0 129.1 L1004.0 126.8 L1006.0 120.8 L1008.0 127.9 L1010.0 119.5 L1012.0 123.2 L1014.0 119.3 L1016.0 128.2 L1018.0 123.4 L1020.0 129.8 L1022.0 131.3 L1024.0 129.9 L1026.0 132.6 L1028.0 132.9 L1030.0 134.3 L1032.0 133.9 L1034.0 134.8 L1036.0 135.4 L1038.0 136.2 L1040.0 135.1 L1042.0 134.9 L1044.0 135.9 L1046.0 137.4 L1048.0 138.0 L1050.0 136.1 L1052.0 138.0 L1054.0 138.0 L1054.0 150.4 L1052.0 150.3 L1050.0 148.5 L1048.0 151.3 L1046.0 149.1 L1044.0 151.5 L1042.0 151.0 L1040.0 151.2 L1038.0 153.1 L1036.0 149.3 L1034.0 151.6 L1032.0 150.1 L1030.0 151.9 L1028.0 153.6 L1026.0 152.2 L1024.0 154.8 L1022.0 152.6 L1020.0 152.6 L1018.0 154.9 L1016.0 161.4 L1014.0 160.7 L1012.0 159.5 L1010.0 159.2 L1008.0 158.8 L1006.0 156.6 L1004.0 163.7 L1002.0 158.0 L1000.0 159.3 L998.0 156.3 L996.0 160.0 L994.0 160.4 L992.0 161.9 L990.0 157.4 L988.0 154.1 L986.0 156.0 L984.0 159.6 L982.0 157.4 L980.0 155.7 L978.0 152.2 L976.0 154.8 L974.0 152.8 L972.0 152.1 L970.0 152.1 L968.0 149.5 L966.0 149.6 L964.0 149.6 L962.0 151.7 L960.0 152.9 L958.0 152.1 L956.0 154.1 L954.0 154.1 L952.0 151.5 L950.0 150.4 L948.0 153.5 L946.0 153.4 L944.0 152.4 L942.0 154.1 L940.0 150.3 L938.0 151.3 L936.0 153.7 L934.0 153.7 L932.0 154.4 L930.0 151.2 L928.0 152.4 L926.0 149.2 L924.0 151.2 L922.0 152.8 L920.0 153.1 L918.0 152.1 L916.0 153.9 L914.0 157.3 L912.0 152.6 L910.0 158.9 L908.0 157.5 L906.0 158.5 L904.0 154.9 L902.0 153.5 L900.0 154.1 L898.0 158.8 L896.0 155.2 L894.0 154.3 L892.0 150.6 L890.0 150.4 L888.0 150.9 L886.0 154.8 L884.0 152.8 L882.0 157.7 L880.0 155.9 L878.0 156.2 L876.0 154.7 L874.0 156.6 L872.0 155.1 L870.0 154.3 L868.0 154.4 L866.0 158.6 L864.0 155.1 L862.0 155.5 L860.0 158.9 L858.0 155.5 L856.0 162.0 L854.0 157.1 L852.0 161.1 L850.0 163.0 L848.0 167.0 L846.0 161.9 L844.0 166.4 L842.0 160.4 L840.0 165.9 L838.0 158.8 L836.0 151.4 L834.0 150.4 L832.0 150.9 L830.0 149.2 L828.0 149.4 L826.0 148.4 L824.0 149.9 L822.0 151.6 L820.0 150.1 L818.0 148.9 L816.0 149.2 L814.0 148.0 L812.0 148.0 L810.0 148.3 L808.0 148.8 L806.0 148.8 L804.0 148.3 L802.0 148.0 L800.0 151.4 L798.0 149.5 L796.0 150.1 L794.0 152.2 L792.0 149.3 L790.0 149.1 L788.0 148.1 L786.0 148.0 L784.0 148.0 L782.0 148.6 L780.0 148.0 L778.0 148.0 L776.0 148.0 L774.0 148.0 L772.0 148.0 L770.0 148.0 L768.0 148.0 L766.0 148.0 L764.0 148.0 L762.0 148.0 L760.0 148.0 L758.0 148.0 L756.0 148.0 L754.0 148.0 L752.0 148.0 L750.0 148.6 L748.0 149.7 L746.0 149.7 L744.0 150.8 L742.0 150.3 L740.0 149.3 L738.0 149.9Z" fill="#ff7d0c"/><rect x="776" y="112" width="2" height="76" fill="#ee740e"/><rect x="854.5" y="35" width="2" height="168" fill="#ee740e"/><rect x="894.5" y="45" width="2" height="179" fill="#ee740e"/><rect x="934.5" y="85" width="2" height="131" fill="#ee740e"/><rect x="973.5" y="35" width="2" height="174" fill="#ee740e"/><rect x="993.5" y="93" width="2" height="143" fill="#ee740e"/><rect x="738" y="30" width="2.4" height="227" fill="#e08420"/><rect x="738" y="197" width="2.4" height="60" fill="#6d8d63"/><rect x="738" y="30" width="2.4" height="10" fill="#6d8d63"/><rect x="835.5" y="47" width="2.5" height="150" fill="#ffb070"/><path d="M819.5 30.5 Q816.5 31 816.5 34 L816.5 253.5 Q816.5 257 819.5 257.5" fill="none" stroke="#e4e4e4" stroke-width="1.6"/><path d="M834 30.5 Q837.5 31 837.5 34 L837.5 253.5 Q837.5 257 834 257.5" fill="none" stroke="#e4e4e4" stroke-width="1.6"/><g fill="none" stroke="#e2e2e2" stroke-linecap="round" stroke-linejoin="round"><path d="M1000.8 477.5 Q1006 468 1012.7 460 Q1018 454.5 1024 451.8 Q1032 448 1040.8 445.8" stroke-width="2.3"/><path d="M1027 451 Q1040 446.3 1055 442.6 L1068.5 439.6" stroke-width="3.8"/><path d="M1068.5 439.4 Q1072 436.5 1074.5 433.7 Q1077.5 430 1081 428 Q1085 426 1089.5 425.3 Q1094 424.8 1097 424 L1100.7 421.7" stroke-width="2.6"/><path d="M1100.7 422.3 L1108 423.4 L1111.8 428 L1109.2 433 L1106.4 431 L1104.6 428" stroke-width="1.5"/><path d="M1071.5 440.2 Q1078 442.5 1084 445 Q1090 447.5 1095 450.8 Q1098.5 454 1099.8 459" stroke-width="2.4"/><path d="M1093.3 442.6 Q1098 441.5 1102.6 442.3 Q1106.5 444.5 1110.1 447.8 Q1115 452 1119.5 456.2" stroke-width="2.4"/><path d="M1078.5 438.5 L1079.3 441.5" stroke-width="1.6"/><path d="M1022 453.4 Q1027 452.8 1029.6 454.5 Q1030.5 457.5 1028.4 460.2 Q1025 462.5 1022 464.8 Q1019 468 1016.5 472 Q1014 476 1011.8 479.6" stroke-width="2.5"/><path d="M1044.6 460.6 Q1041 458.6 1038 459.2 Q1035 461 1034.3 465 Q1033.8 470 1034.4 475" stroke-width="2.8"/></g></svg>
</div></div></body></html>
